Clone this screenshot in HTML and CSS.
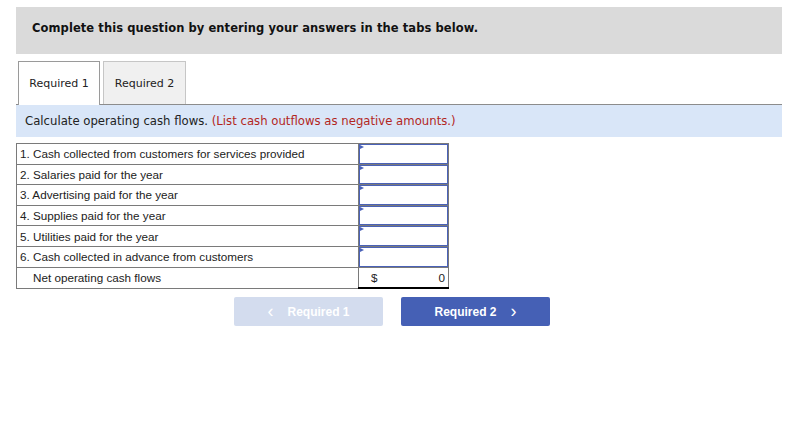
FILE: index.html
```html
<!DOCTYPE html>
<html>
<head>
<meta charset="utf-8">
<link rel="stylesheet" href="styles.css">
</head>
<body>
<div class="page">
  <div class="header">Complete this question by entering your answers in the tabs below.</div>
  <div class="tabs">
    <div class="tab active">Required 1</div>
    <div class="tab">Required 2</div>
  </div>
  <div class="instr">Calculate operating cash flows. <span class="red">(List cash outflows as negative amounts.)</span></div>
  <table class="grid">
    <colgroup><col class="c1"><col class="c2"></colgroup>
    <tr><td class="lbl">1. Cash collected from customers for services provided</td><td class="val"><div class="inp"></div></td></tr>
    <tr><td class="lbl">2. Salaries paid for the year</td><td class="val"><div class="inp"></div></td></tr>
    <tr><td class="lbl">3. Advertising paid for the year</td><td class="val"><div class="inp"></div></td></tr>
    <tr><td class="lbl">4. Supplies paid for the year</td><td class="val"><div class="inp"></div></td></tr>
    <tr><td class="lbl">5. Utilities paid for the year</td><td class="val"><div class="inp"></div></td></tr>
    <tr><td class="lbl">6. Cash collected in advance from customers</td><td class="val"><div class="inp"></div></td></tr>
    <tr><td class="lbl total">Net operating cash flows</td><td class="val sum"><span>$</span><span>0</span></td></tr>
  </table>
  <div class="nav">
    <button class="btn disabled"><span class="chev">&lsaquo;</span>Required 1</button>
    <button class="btn primary">Required 2<span class="chev right">&rsaquo;</span></button>
  </div>
</div>
</body>
</html>
```
FILE: styles.css
```css
html, body { margin: 0; padding: 0; background: #fff; }
.page { padding: 7px 9px 0 16px; font-family: "DejaVu Sans", Verdana, sans-serif; }
.header {
  background: #dadada;
  height: 47px;
  box-sizing: border-box;
  padding: 14px 0 0 16px;
  font-weight: bold;
  font-size: 11.5px;
  letter-spacing: 0.08px;
  color: #111;
}
.tabs {
  display: flex;
  gap: 3px;
  margin-top: 7px;
  padding-left: 2px;
  border-bottom: 1px solid #8c8c8c;
  height: 43px;
}
.tab {
  box-sizing: border-box;
  height: 43px;
  width: 83px;
  border: 1px solid #c6c6c6;
  border-bottom: none;
  background: #f0f0f0;
  font-size: 11px;
  color: #222;
  display: flex;
  align-items: center;
  justify-content: center;
}
.tab.active {
  width: 82px;
  height: 44px;
  background: #fff;
  border-color: #9a9a9a;
  position: relative;
  z-index: 1;
}
.instr {
  background: #d9e6f8;
  height: 32px;
  box-sizing: border-box;
  padding: 9px 0 0 9px;
  font-size: 11.7px;
  color: #222;
}
.red { color: #b3261e; }
.grid {
  margin-top: 6px;
  border-collapse: collapse;
  table-layout: fixed;
  width: 432px;
  font-family: "Liberation Sans", Arial, sans-serif;
  font-size: 11.7px;
  color: #222;
}
.c1 { width: 342px; }
.c2 { width: 90px; }
.grid td {
  border: 1px solid #7a7a7a;
  height: 19.6px;
  padding: 0;
  white-space: nowrap;
}
.lbl { padding-left: 3px !important; }
.lbl.total { padding-left: 16px !important; }
.val { position: relative; }
.inp {
  box-sizing: border-box;
  height: 19.6px;
  border: 1px solid #4a62b8;
  position: relative;
}
.inp::before {
  content: "";
  position: absolute;
  left: 0;
  top: 0;
  border-left: 4px solid #4a62b8;
  border-top: 2px solid transparent;
  border-bottom: 2px solid transparent;
}
.val.sum {
  border-bottom: 2px solid #000;
  padding: 0 3px 0 12px;
}
.val.sum span:first-child { float: left; }
.val.sum span:last-child { float: right; }
.nav {
  display: flex;
  gap: 18px;
  margin: 8px 0 0 218px;
}
.btn {
  width: 149px;
  height: 29px;
  border: none;
  border-radius: 2px;
  font-family: "Liberation Sans", Arial, sans-serif;
  font-weight: bold;
  font-size: 12px;
  color: #fff;
  display: flex;
  align-items: center;
  justify-content: center;
  padding: 0;
}
.btn.disabled { background: #d3dcee; }
.btn.primary { background: #4560b5; }
.chev { font-size: 18px; font-weight: normal; margin-right: 14px; line-height: 1; position: relative; top: -1px; }
.chev.right { margin: 0 0 0 14px; }
```
